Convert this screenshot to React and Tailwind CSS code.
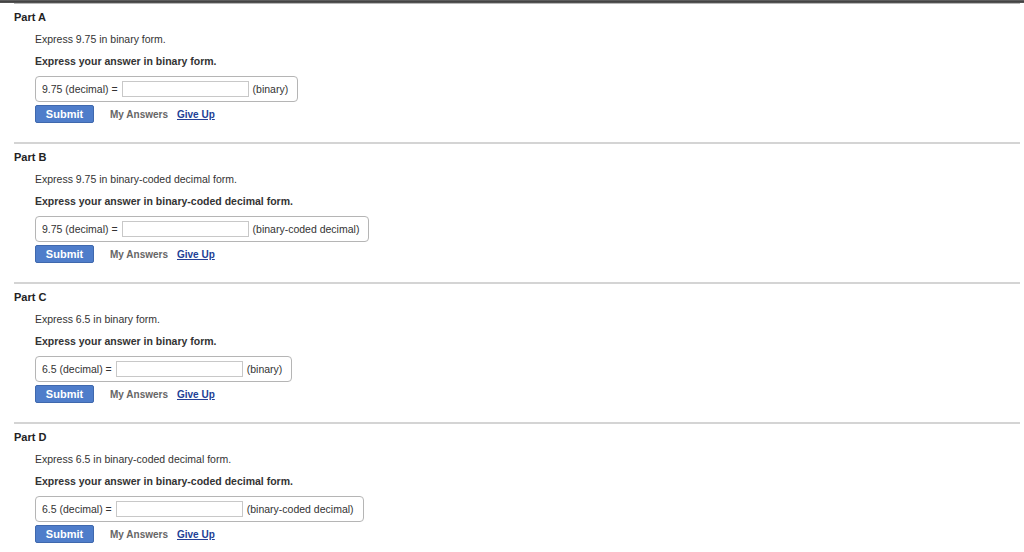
import React from "react";

const parts = [
  { label: "Part A", q: "Express 9.75 in binary form.", ins: "Express your answer in binary form.", lhs: "9.75 (decimal) =", rhs: "(binary)" },
  { label: "Part B", q: "Express 9.75 in binary-coded decimal form.", ins: "Express your answer in binary-coded decimal form.", lhs: "9.75 (decimal) =", rhs: "(binary-coded decimal)" },
  { label: "Part C", q: "Express 6.5 in binary form.", ins: "Express your answer in binary form.", lhs: "6.5 (decimal) =", rhs: "(binary)" },
  { label: "Part D", q: "Express 6.5 in binary-coded decimal form.", ins: "Express your answer in binary-coded decimal form.", lhs: "6.5 (decimal) =", rhs: "(binary-coded decimal)" },
];

function Part({ p, first }) {
  return (
    <div className="flex flex-col">
      {!first && <div className="h-[2px] bg-[#d4d4d4] mr-[4px]" />}
      <div className="pt-[6px] pb-[19px]">
        <div className="h-[14px] leading-[14px] text-[11px] font-bold text-[#222]">{p.label}</div>
        <div className="pl-[21px] flex flex-col items-start">
          <div className="mt-[8px] h-[14px] leading-[14px] text-[10.5px] text-[#333]">{p.q}</div>
          <div className="mt-[8px] h-[14px] leading-[14px] text-[10.5px] font-bold text-[#333]">{p.ins}</div>
          <div className="mt-[8px] h-[26px] flex items-center gap-[4px] pl-[6px] pr-[9px] border border-[#b5b5b5] rounded-[4px] bg-white">
            <span className="text-[10.5px] text-[#333] leading-[14px]">{p.lhs}</span>
            <div className="w-[127px] h-[16px] border border-[#c8c8c8] bg-white" />
            <span className="text-[10.5px] text-[#333] leading-[14px]">{p.rhs}</span>
          </div>
          <div className="mt-[3px] flex items-center">
            <div className="w-[59px] h-[18px] flex items-center justify-center rounded-[2px] border border-[#3f68ad] bg-[#4f7dca] text-white text-[11px] font-bold">
              Submit
            </div>
            <span className="ml-[16px] text-[10px] font-bold text-[#666]">My Answers</span>
            <span className="ml-[9px] text-[10px] font-bold text-[#233f96] underline">Give Up</span>
          </div>
        </div>
      </div>
    </div>
  );
}

export default function App() {
  return (
    <div className="w-[1024px] h-[552px] overflow-hidden bg-white" style={{ fontFamily: '"Liberation Sans", Arial, sans-serif' }}>
      <div className="h-[3px] bg-gradient-to-b from-[#6a6a6a] via-[#444] to-[#5a5a5a]" />
      <div className="h-[1px] ml-[14px] mr-[4px] bg-[#b8b8b8]" />
      <div className="pl-[14px]">
        {parts.map((p, i) => (
          <Part key={p.label} p={p} first={i === 0} />
        ))}
      </div>
    </div>
  );
}
